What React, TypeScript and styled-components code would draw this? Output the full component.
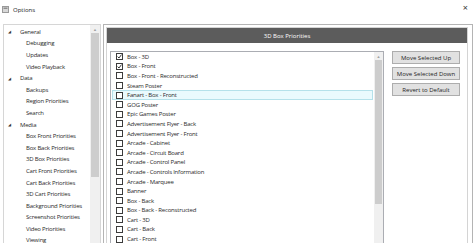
import React from 'react';
import styled, { createGlobalStyle } from 'styled-components';

const GlobalStyle = createGlobalStyle`
  html, body { margin: 0; padding: 0; background: #ffffff; }
  body { font-family: "Open Sans", "Noto Sans", sans-serif; }
`;

const treeItems = [
  { label: 'General', parent: true },
  { label: 'Debugging' },
  { label: 'Updates' },
  { label: 'Video Playback' },
  { label: 'Data', parent: true },
  { label: 'Backups' },
  { label: 'Region Priorities' },
  { label: 'Search' },
  { label: 'Media', parent: true },
  { label: 'Box Front Priorities' },
  { label: 'Box Back Priorities' },
  { label: '3D Box Priorities' },
  { label: 'Cart Front Priorities' },
  { label: 'Cart Back Priorities' },
  { label: '3D Cart Priorities' },
  { label: 'Background Priorities' },
  { label: 'Screenshot Priorities' },
  { label: 'Video Priorities' },
  { label: 'Viewing' },
];

const priorities = [
  { label: 'Box - 3D', checked: true },
  { label: 'Box - Front', checked: true },
  { label: 'Box - Front - Reconstructed' },
  { label: 'Steam Poster' },
  { label: 'Fanart - Box - Front', selected: true },
  { label: 'GOG Poster' },
  { label: 'Epic Games Poster' },
  { label: 'Advertisement Flyer - Back' },
  { label: 'Advertisement Flyer - Front' },
  { label: 'Arcade - Cabinet' },
  { label: 'Arcade - Circuit Board' },
  { label: 'Arcade - Control Panel' },
  { label: 'Arcade - Controls Information' },
  { label: 'Arcade - Marquee' },
  { label: 'Banner' },
  { label: 'Box - Back' },
  { label: 'Box - Back - Reconstructed' },
  { label: 'Cart - 3D' },
  { label: 'Cart - Back' },
  { label: 'Cart - Front' },
  { label: '' },
];

const Window = styled.div`
  width: 474px;
  height: 243px;
  display: flex;
  flex-direction: column;
  background: #ffffff;
  overflow: hidden;
  color: #2a2a2a;
`;

const TitleBar = styled.div`
  height: 19px;
  flex: none;
  display: flex;
  align-items: center;
  padding: 0 6px 5px 2px;
  gap: 4px;
  font-size: 6px;
  color: #222;
`;

const TitleText = styled.span`
  flex: 1;
`;

const CloseGlyph = styled.span`
  font-size: 9px;
  color: #333;
  line-height: 1;
  margin-top: -4px;
`;

const Body = styled.div`
  flex: 1;
  min-height: 0;
  display: flex;
  gap: 2px;
  padding: 0 1px 0 3px;
`;

const TreeBox = styled.div`
  width: 96px;
  flex: none;
  border: 1px solid #d6d6d6;
  border-bottom: none;
  display: flex;
  overflow: hidden;
`;

const TreeList = styled.div`
  flex: 1;
  padding-top: 1px;
`;

const TreeRow = styled.div<{ $parent?: boolean }>`
  height: 11.6px;
  display: flex;
  align-items: center;
  padding-left: ${(p) => (p.$parent ? '4px' : '22px')};
  font-size: 6px;
  letter-spacing: -0.2px;
  white-space: nowrap;
`;

const Expander = styled.span`
  width: 8px;
  font-size: 4px;
  color: #333;
  margin-right: 4px;
`;

const ScrollTrack = styled.div<{ $w: number }>`
  width: ${(p) => p.$w}px;
  flex: none;
  background: #f0f0f0;
  display: flex;
  flex-direction: column;
  align-items: stretch;
`;

const ScrollArrow = styled.div`
  height: 8px;
  flex: none;
  display: flex;
  align-items: center;
  justify-content: center;
  color: #a0a0a0;
  font-size: 4px;
`;

const ScrollThumb = styled.div<{ $h: number }>`
  height: ${(p) => p.$h}px;
  flex: none;
  margin: 0 1px;
  background: #cdcdcd;
`;

const RightPanel = styled.div`
  flex: 1;
  border: 1px solid #b4b4b4;
  border-bottom: none;
  padding: 2px 4px 0 2px;
  display: flex;
`;

const Frame = styled.div`
  flex: 1;
  border: 1px solid #d4d4d4;
  border-bottom: none;
  display: flex;
  flex-direction: column;
`;

const Header = styled.div`
  height: 15px;
  flex: none;
  background: #5c5c5c;
  color: #ffffff;
  font-size: 6px;
  display: flex;
  align-items: center;
  justify-content: center;
`;

const Content = styled.div`
  flex: 1;
  min-height: 0;
  display: flex;
  gap: 8px;
  padding: 8px 6px 0 3px;
`;

const ListBox = styled.div`
  width: 272px;
  flex: none;
  border: 1px solid #abadb3;
  border-bottom: none;
  display: flex;
  overflow: hidden;
`;

const Items = styled.div`
  flex: 1;
  padding: 0 1px;
`;

const ItemRow = styled.div<{ $selected?: boolean }>`
  height: 9.6px;
  box-sizing: border-box;
  display: flex;
  align-items: center;
  gap: 4px;
  padding-left: 3px;
  font-size: 6px;
  letter-spacing: -0.2px;
  white-space: nowrap;
  background: ${(p) => (p.$selected ? '#eafafd' : 'transparent')};
  border: 1px solid ${(p) => (p.$selected ? '#b5e1ea' : 'transparent')};
`;

const Check = styled.span`
  width: 7px;
  height: 7px;
  box-sizing: border-box;
  border: 1px solid #3c3c3c;
  background: #ffffff;
  flex: none;
  display: flex;
  align-items: center;
  justify-content: center;
`;

const Buttons = styled.div`
  width: 68px;
  flex: none;
  display: flex;
  flex-direction: column;
  gap: 3px;
`;

const Button = styled.button`
  height: 13px;
  padding: 0;
  border: 1px solid #adadad;
  background: #e1e1e1;
  font-family: inherit;
  font-size: 6px;
  color: #1e1e1e;
`;

function WindowIcon() {
  return (
    <svg width="7" height="7" viewBox="0 0 7 7">
      <rect x="0.5" y="0.5" width="6" height="6" fill="#d8d8d8" stroke="#9a9a9a" />
      <rect x="1.5" y="1.5" width="4" height="1.5" fill="#8e8e8e" />
    </svg>
  );
}

function CheckMark() {
  return (
    <svg width="5" height="5" viewBox="0 0 5 5">
      <path d="M0.6 2.6 L2 4 L4.5 0.6" fill="none" stroke="#222" strokeWidth="0.9" />
    </svg>
  );
}

export default function App() {
  return (
    <Window>
      <GlobalStyle />
      <TitleBar>
        <WindowIcon />
        <TitleText>Options</TitleText>
        <CloseGlyph>×</CloseGlyph>
      </TitleBar>
      <Body>
        <TreeBox>
          <TreeList>
            {treeItems.map((t) => (
              <TreeRow key={t.label} $parent={t.parent}>
                {t.parent && <Expander>◢</Expander>}
                {t.label}
              </TreeRow>
            ))}
          </TreeList>
          <ScrollTrack $w={10}>
            <ScrollArrow>▲</ScrollArrow>
            <ScrollThumb $h={144} />
          </ScrollTrack>
        </TreeBox>
        <RightPanel>
          <Frame>
            <Header>3D Box Priorities</Header>
            <Content>
              <ListBox>
                <Items>
                  {priorities.map((p, i) => (
                    <ItemRow key={i} $selected={p.selected}>
                      <Check>{p.checked && <CheckMark />}</Check>
                      {p.label}
                    </ItemRow>
                  ))}
                </Items>
                <ScrollTrack $w={9}>
                  <ScrollArrow>▲</ScrollArrow>
                  <ScrollThumb $h={144} />
                </ScrollTrack>
              </ListBox>
              <Buttons>
                <Button>Move Selected Up</Button>
                <Button>Move Selected Down</Button>
                <Button>Revert to Default</Button>
              </Buttons>
            </Content>
          </Frame>
        </RightPanel>
      </Body>
    </Window>
  );
}
